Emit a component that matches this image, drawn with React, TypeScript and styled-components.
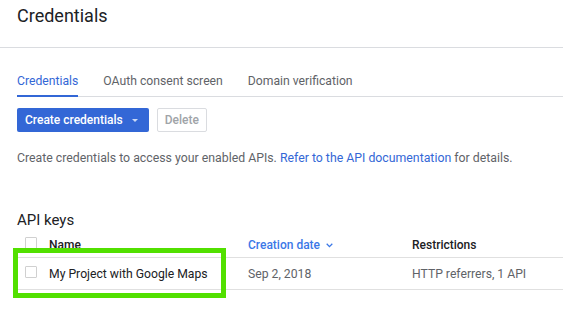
import React from "react";
import styled, { createGlobalStyle } from "styled-components";

const Global = createGlobalStyle`
  html, body { margin: 0; padding: 0; background: #ffffff; }
  body { font-family: Roboto, "Liberation Sans", Arial, sans-serif; color: #202124; }
  * { box-sizing: border-box; }
`;

const Page = styled.div`
  position: relative;
  width: 563px;
  height: 320px;
  overflow: hidden;
  background: #fff;
`;

const Header = styled.header`
  padding: 4px 17px 19px;
  border-bottom: 1px solid #dadce0;
`;

const Title = styled.h1`
  margin: 0;
  font-size: 18px;
  line-height: 24px;
  font-weight: 400;
  color: #202124;
`;

const Content = styled.div`
  padding: 0 0 0 17px;
`;

const TabBar = styled.nav`
  display: flex;
  gap: 25px;
  border-bottom: 1px solid #dadce0;
`;

const Tab = styled.div<{ $active?: boolean }>`
  padding: 25px 0 6px;
  font-size: 12.2px;
  line-height: 16px;
  color: ${(p) => (p.$active ? "#3367d6" : "#5f6368")};
  border-bottom: 2px solid ${(p) => (p.$active ? "#3367d6" : "transparent")};
  margin-bottom: -1px;
`;

const Toolbar = styled.div`
  display: flex;
  gap: 8px;
  margin-top: 11px;
`;

const PrimaryButton = styled.button`
  display: flex;
  align-items: center;
  gap: 9px;
  height: 24px;
  padding: 0 11px 0 8px;
  border: none;
  border-radius: 2px;
  background: #3367d6;
  color: #fff;
  font-family: inherit;
  font-size: 12px;
  font-weight: 500;
  cursor: pointer;
`;

const Caret = styled.span`
  width: 0;
  height: 0;
  border-left: 3px solid transparent;
  border-right: 3px solid transparent;
  border-top: 3px solid rgba(255, 255, 255, 0.75);
`;

const SecondaryButton = styled.button`
  height: 24px;
  padding: 0 7px;
  border: 1px solid #dadce0;
  border-radius: 2px;
  background: #fff;
  color: #a0a4a8;
  font-family: inherit;
  font-size: 12px;
  font-weight: 500;
`;

const Description = styled.p`
  margin: 18px 0 0;
  font-size: 12.3px;
  line-height: 16px;
  color: #5f6368;
  white-space: nowrap;
`;

const Link = styled.a`
  color: #3367d6;
  text-decoration: none;
`;

const SectionTitle = styled.h2`
  margin: 44px 0 0;
  font-size: 15px;
  line-height: 20px;
  font-weight: 400;
  color: #202124;
`;

const Table = styled.div`
  margin-top: 3px;
`;

const Row = styled.div<{ $head?: boolean }>`
  display: grid;
  grid-template-columns: 12px 187px 152px 1fr;
  column-gap: 12px;
  align-items: start;
  padding: ${(p) => (p.$head ? "4px 0 4px 8px" : "7px 0 6px 8px")};
  border-bottom: 1px solid #e0e0e0;
  font-size: ${(p) => (p.$head ? "12px" : "12.2px")};
  line-height: ${(p) => (p.$head ? "16px" : "18px")};
`;

const Checkbox = styled.span<{ $offset: number }>`
  display: block;
  width: 12px;
  height: 12px;
  margin-top: ${(p) => p.$offset}px;
  border: 1px solid #d0d0d0;
  border-radius: 1px;
  background: #fff;
`;

const HeadCell = styled.div<{ $sorted?: boolean }>`
  display: flex;
  align-items: center;
  font-weight: 500;
  color: ${(p) => (p.$sorted ? "#3b78e7" : "#202124")};
`;

const Cell = styled.div<{ $muted?: boolean }>`
  color: ${(p) => (p.$muted ? "#5f6368" : "#202124")};
  white-space: nowrap;
`;

const SortIcon = styled.svg`
  margin-left: 6px;
`;

const Highlight = styled.div`
  position: absolute;
  left: 13px;
  top: 248px;
  width: 213px;
  height: 50px;
  border: 5px solid #52e000;
  pointer-events: none;
`;

export default function App() {
  return (
    <Page>
      <Global />
      <Header>
        <Title>Credentials</Title>
      </Header>
      <Content>
        <TabBar>
          <Tab $active>Credentials</Tab>
          <Tab>OAuth consent screen</Tab>
          <Tab>Domain verification</Tab>
        </TabBar>
        <Toolbar>
          <PrimaryButton>
            Create credentials
            <Caret />
          </PrimaryButton>
          <SecondaryButton disabled>Delete</SecondaryButton>
        </Toolbar>
        <Description>
          Create credentials to access your enabled APIs.{" "}
          <Link href="#">Refer to the API documentation</Link> for details.
        </Description>
        <SectionTitle>API keys</SectionTitle>
        <Table>
          <Row $head>
            <Checkbox $offset={0} />
            <HeadCell>Name</HeadCell>
            <HeadCell $sorted>
              Creation date
              <SortIcon width="7" height="5" viewBox="0 0 7 5">
                <path d="M0.7 0.8 L3.5 3.6 L6.3 0.8" fill="none" stroke="#3b78e7" strokeWidth="1.3" />
              </SortIcon>
            </HeadCell>
            <HeadCell>Restrictions</HeadCell>
          </Row>
          <Row>
            <Checkbox $offset={1} />
            <Cell>My Project with Google Maps</Cell>
            <Cell $muted>Sep 2, 2018</Cell>
            <Cell $muted>HTTP referrers, 1 API</Cell>
          </Row>
        </Table>
      </Content>
      <Highlight />
    </Page>
  );
}
